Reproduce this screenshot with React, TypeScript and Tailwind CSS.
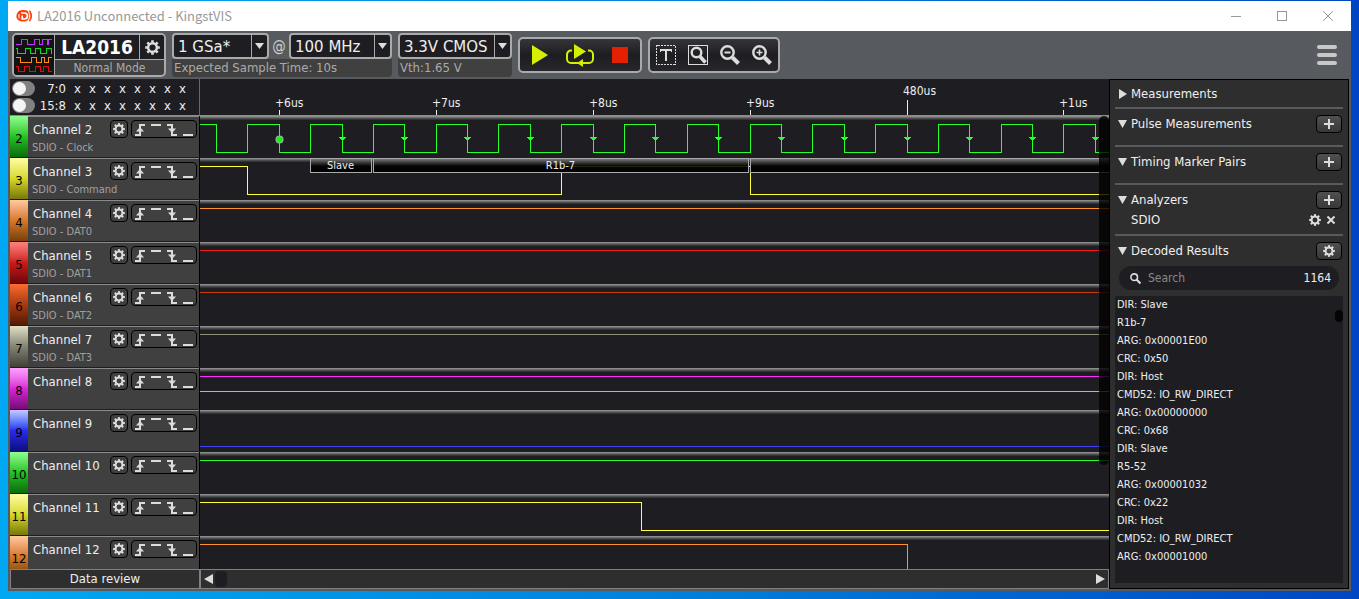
import type { ReactNode } from "react"

interface Channel {
  id: number
  role?: string
  line: string
  badge: string
  path: string
}

// y of the high and low level inside a 42px lane
const HIGH = 8.5
const LOW = 36.5
const END = 4000

const flat = (y: number) => `M0 ${y}H${END}`

const PERIOD = 62.78
const CLOCK_FALLS = Array.from({ length: 60 }, (_, i) => Math.round(15.95 + PERIOD * i) + 0.5)
const CLOCK_RISES = Array.from({ length: 60 }, (_, i) => Math.round(47.3 + PERIOD * i) + 0.5)
const clockPath = `M0 ${HIGH}` + CLOCK_FALLS.map((x, i) => `H${x}V${LOW}H${CLOCK_RISES[i]}V${HIGH}`).join("")

const channels: Channel[] = [
  { id: 2, role: "SDIO - Clock", line: "#2bff2b", badge: "from-[#8dff8d] via-[#22c322] to-[#0c6c0c]", path: clockPath },
  { id: 3, role: "SDIO - Command", line: "#ffff3c", badge: "from-[#ffffa0] via-[#d8d826] to-[#77770c]", path: `M0 ${HIGH}H47.5V${LOW}H361.5V${HIGH}H550.5V${LOW}H${END}` },
  { id: 4, role: "SDIO - DAT0", line: "#ff9130", badge: "from-[#ffc9a0] via-[#d87826] to-[#77400c]", path: flat(HIGH) },
  { id: 5, role: "SDIO - DAT1", line: "#ee1c1c", badge: "from-[#ff8080] via-[#cc1a1a] to-[#6e0808]", path: flat(HIGH) },
  { id: 6, role: "SDIO - DAT2", line: "#c83c10", badge: "from-[#ff6a30] via-[#a83a10] to-[#541a06]", path: flat(HIGH) },
  { id: 7, role: "SDIO - DAT3", line: "#8f8f78", badge: "from-[#e2e2c8] via-[#848474] to-[#404036]", path: flat(HIGH) },
  { id: 8, line: "#ff30ff", badge: "from-[#ffa0ff] via-[#d826d8] to-[#770c77]", path: flat(HIGH) },
  { id: 9, line: "#4040f0", badge: "from-[#c8c8ff] via-[#2a2aee] to-[#0e0e80]", path: flat(LOW) },
  { id: 10, line: "#2bff2b", badge: "from-[#8dff8d] via-[#22c322] to-[#0c6c0c]", path: flat(HIGH) },
  { id: 11, line: "#ffff3c", badge: "from-[#ffffa0] via-[#d8d826] to-[#77770c]", path: `M0 ${HIGH}H441.5V${LOW}H${END}` },
  { id: 12, line: "#ff9130", badge: "from-[#ffc9a0] via-[#d87826] to-[#77400c]", path: `M0 ${HIGH}H707.5V${LOW + 20}H${END}` },
]

const ticks = [
  { x: 79, label: "+6us" },
  { x: 236, label: "+7us" },
  { x: 393, label: "+8us" },
  { x: 550, label: "+9us" },
  { x: 707, label: "480us", major: true },
  { x: 863, label: "+1us" },
]

const results = [
  "DIR: Slave",
  "R1b-7",
  "ARG: 0x00001E00",
  "CRC: 0x50",
  "DIR: Host",
  "CMD52: IO_RW_DIRECT",
  "ARG: 0x00000000",
  "CRC: 0x68",
  "DIR: Slave",
  "R5-52",
  "ARG: 0x00001032",
  "CRC: 0x22",
  "DIR: Host",
  "CMD52: IO_RW_DIRECT",
  "ARG: 0x00001000",
]

const GEAR_TEETH = [0, 45, 90, 135, 180, 225, 270, 315]

function Gear({ size }: { size: number }) {
  return (
    <svg width={size} height={size} viewBox="0 0 16 16" fill="none" stroke="#dcdcdc" aria-hidden="true">
      <circle cx="8" cy="8" r="4.6" strokeWidth="2.6" />
      {GEAR_TEETH.map((a) => (
        <path key={a} d="M8 3.2V0.2" strokeWidth="2.8" transform={`rotate(${a} 8 8)`} />
      ))}
    </svg>
  )
}

function TitleBar() {
  return (
    <header className="flex h-[30px] shrink-0 items-center bg-white pl-2">
      <svg width="16" height="16" viewBox="0 0 16 16" aria-hidden="true">
        <path d="M3 3C5 1.800 9 1.600 11.200 2.600c2.400 1.200 3.400 3.600 3 6-.6 3-3.400 5-6.800 5-2.400 0-4.400-.6-5.600-1.800C-.2 9.800-.2 5.600 3 3z" fill="#f4420c" />
        <path d="M5 5h3.400a3 3 0 0 1 0 6H6.200V7.600" fill="none" stroke="#fff" strokeWidth="1.700" />
        <path d="M13.400 2.600c2.200 3 2.200 7.400 0 10.600" fill="none" stroke="#f4420c" strokeWidth="1.600" />
        <path d="M12.200 2.800c1.700 3 1.700 7.200 0 10.200M3 6v4.400" fill="none" stroke="#fff" strokeWidth="1" />
      </svg>
      <h1 className="ml-[5px] flex-1 font-['Noto_Sans_CJK_SC',sans-serif] text-[13px] leading-[18px] text-[#999]">LA2016 Unconnected - KingstVIS</h1>
      <button type="button" aria-label="Minimize" className="flex h-full w-[46px] items-center justify-center">
        <svg width="10" height="10" stroke="#999" shapeRendering="crispEdges"><path d="M0 5.500h10" /></svg>
      </button>
      <button type="button" aria-label="Maximize" className="flex h-full w-[46px] items-center justify-center">
        <svg width="10" height="10" stroke="#999" fill="none" shapeRendering="crispEdges"><path d="M.5.500h9v9h-9z" /></svg>
      </button>
      <button type="button" aria-label="Close" className="flex h-full w-[46px] items-center justify-center">
        <svg width="10" height="10" stroke="#999"><path d="M0 0l10 10M10 0L0 10" /></svg>
      </button>
    </header>
  )
}

function ModelBox() {
  return (
    <div className="flex h-11 w-[154px] overflow-hidden rounded-[5px] border-2 border-[#aaa] bg-[#404040]">
      <svg width="40" height="40" viewBox="42 105 120 120" className="shrink-0 bg-[#131313]" fill="none" strokeWidth="3" shapeRendering="crispEdges" aria-hidden="true">
        <path stroke="#c030ff" d="M48 134H65V119H83V134H102V119H119V134H126V119H141V134H144V119H156" />
        <path stroke="#10d820" d="M48 146H52V161H76V146H91V161H106V146H121V161H139V146H154V161" />
        <path stroke="#ff8a10" d="M48 173H61V188H94V173H109V188H124V173H133V188H145V173H156" />
        <path stroke="#e00c0c" d="M48 200H55V214H72V200H87V214H106V200H121V214H130V200H145V214H156" />
      </svg>
      <div className="flex flex-1 flex-col border-l border-[#aaa]">
        <div className="flex h-[25px] border-b border-[#aaa] bg-[#1e1e22]">
          <span className="flex-1 text-center text-[19px] leading-6 font-bold text-white">LA2016</span>
          <button type="button" aria-label="Device settings" className="flex w-[25px] items-center justify-center border-l border-[#aaa]">
            <Gear size={15} />
          </button>
        </div>
        <span className="text-center text-[12px] leading-4 text-[#aaa]">Normal Mode</span>
      </div>
    </div>
  )
}

function Combo({ label, value, className }: { label: string; value: string; className: string }) {
  return (
    <div className={`relative h-[26px] rounded-[4px] border-2 border-[#aaa] bg-[#1e1e22] ${className}`}>
      <select aria-label={label} className="h-full w-full appearance-none pl-1 font-['DejaVu_Sans',sans-serif] text-[15px] leading-[22px] text-[#eee] outline-none">
        <option>{value}</option>
      </select>
      <span className="pointer-events-none absolute inset-y-0 right-0 flex w-4 items-center justify-center border-l border-[#aaa]">
        <svg width="9" height="6" fill="#ddd"><path d="M0 0h9L4.500 6z" /></svg>
      </span>
    </div>
  )
}

function ToolButton({ label, wide, children }: { label: string; wide?: boolean; children: ReactNode }) {
  return (
    <button type="button" aria-label={label} className={`flex h-full items-center justify-center ${wide ? "w-10" : "w-8"}`}>
      {children}
    </button>
  )
}

function Magnifier({ children }: { children: ReactNode }) {
  return (
    <svg width="20" height="20" viewBox="0 0 20 20" fill="none" stroke="#dcdcdc" aria-hidden="true">
      <circle cx="7.500" cy="7.500" r="6.200" strokeWidth="2.400" />
      <path d="M12.500 12.500l6 6" strokeWidth="4" />
      {children}
    </svg>
  )
}

function Toolbar() {
  return (
    <div className="flex h-12 shrink-0 items-start gap-1.5 pt-0.5 pr-3 pl-0.5">
      <ModelBox />
      <div className="rounded-[4px] bg-[#404040]">
        <div className="flex items-center bg-[#575b5f]">
          <Combo label="Sample depth" value="1 GSa*" className="w-[97px]" />
          <span className="w-5 text-center text-[15px] leading-[26px] text-[#ccc]">@</span>
          <Combo label="Sample rate" value="100 MHz" className="w-[103px]" />
        </div>
        <p className="pl-0.5 text-[13px] leading-[18px] text-[#aaa]">Expected Sample Time: 10s</p>
      </div>
      <div className="rounded-[4px] bg-[#404040]">
        <Combo label="Threshold" value="3.3V CMOS" className="w-[114px]" />
        <p className="pl-0.5 text-[13px] leading-[18px] text-[#aaa]">Vth:1.65 V</p>
      </div>
      <div className="mt-1 flex h-9 rounded-[5px] border-2 border-[#aaa] bg-linear-to-b from-[#34343a] via-[#1e1e22] to-[#26262b]">
        <ToolButton label="Start" wide>
          <svg width="16" height="20" fill="#d2f000"><path d="M0 0L16 10L0 20z" /></svg>
        </ToolButton>
        <ToolButton label="Start repeatedly" wide>
          <svg width="28" height="23" viewBox="0 0 28 23" fill="none" stroke="#d2f000" strokeWidth="2">
            <path d="M6 6.500H5a4 4 0 0 0-4 4V15a4 4 0 0 0 4 4H23a4 4 0 0 0 4-4v-4.500a4 4 0 0 0-4-4h-1" />
            <path d="M8 0L20 7.500L8 15z" fill="#d2f000" stroke="none" />
            <path d="M11 19l6-4v8z" fill="#d2f000" stroke="none" />
          </svg>
        </ToolButton>
        <ToolButton label="Stop" wide>
          <span className="size-4 bg-[#e32000]" />
        </ToolButton>
      </div>
      <div className="mt-1 flex h-9 rounded-[5px] border-2 border-[#aaa] bg-linear-to-b from-[#34343a] via-[#1e1e22] to-[#26262b]">
        <ToolButton label="Add text note">
          <svg width="20" height="20" fill="none" stroke="#dcdcdc" shapeRendering="crispEdges">
            <rect x=".5" y=".5" width="19" height="19" rx="1" strokeDasharray="2 1" />
            <path d="M4.500 7V4M15.500 7V4" />
            <path d="M4 5h12M10 5V16" strokeWidth="2" />
          </svg>
        </ToolButton>
        <ToolButton label="Zoom to fit">
          <svg width="20" height="20" fill="none" stroke="#dcdcdc">
            <rect x=".5" y=".5" width="19" height="19" />
            <circle cx="8.500" cy="7.500" r="4.800" strokeWidth="2.400" />
            <path d="M12 11.500l5.500 6" strokeWidth="3.600" />
          </svg>
        </ToolButton>
        <ToolButton label="Zoom out">
          <Magnifier><path d="M4.500 7.500h6" strokeWidth="2" /></Magnifier>
        </ToolButton>
        <ToolButton label="Zoom in">
          <Magnifier><path d="M4.500 7.500h6M7.500 4.500v6" strokeWidth="1.600" /></Magnifier>
        </ToolButton>
      </div>
      <button type="button" aria-label="Menu" className="mt-3 ml-auto flex w-5 flex-col gap-1">
        <span className="h-1 w-full rounded-full bg-[#c8c8c8]" />
        <span className="h-1 w-full rounded-full bg-[#c8c8c8]" />
        <span className="h-1 w-full rounded-full bg-[#c8c8c8]" />
      </button>
    </div>
  )
}

function BusRow({ label }: { label: string }) {
  return (
    <div className="flex h-[17px] items-center pl-0.5 text-[13px] text-[#eee]">
      <input
        type="checkbox"
        aria-label={`Bus ${label}`}
        className="h-[15px] w-[23px] appearance-none rounded-full bg-[#808080] before:ml-px before:mt-px before:block before:size-[13px] before:rounded-full before:bg-[#f4f4f4] checked:before:ml-2"
      />
      <span className="mr-[6px] w-[31px] text-right">{label}</span>
      {Array.from({ length: 8 }, (_, i) => (
        <span key={i} className="w-[15px] pl-0.5">x</span>
      ))}
    </div>
  )
}

function Ruler() {
  return (
    <svg className="h-full min-w-0 flex-1" fill="#eee" shapeRendering="crispEdges">
      {ticks.map((t) => (
        <g key={t.label}>
          <rect x={t.x} y={t.major ? 21 : 31} width="1" height={t.major ? 15 : 5} />
          <text x={t.x - 4} y={t.major ? 16 : 28} fontSize="12">{t.label}</text>
        </g>
      ))}
    </svg>
  )
}

function TriggerButton({ label, d, head }: { label: string; d: string; head?: string }) {
  return (
    <button type="button" aria-label={label} className="h-4 w-4">
      <svg width="16" height="16" fill="none" stroke="#dcdcdc" strokeWidth="2">
        <path d={d} />
        {head && <path d={head} fill="#dcdcdc" stroke="none" />}
      </svg>
    </button>
  )
}

function ChannelLabel({ channel }: { channel: Channel }) {
  return (
    <div className="flex w-[190px] shrink-0 border-r border-black">
      <div className={`w-[18px] bg-linear-to-b text-center text-[13px] leading-[46px] text-black ${channel.badge}`}>{channel.id}</div>
      <div className="flex-1 border-t border-[#8a8a8a] bg-[#404040] pt-[3px]">
        <div className="flex h-[18px] pr-0.5">
          <span className="flex-1 pl-[5px] text-[13px] leading-[20px] text-[#eee]">Channel {channel.id}</span>
          <button type="button" aria-label={`Channel ${channel.id} settings`} className="mr-[3px] flex size-[18px] items-center justify-center rounded-[4px] border border-black">
            <Gear size={12} />
          </button>
          <div className="flex rounded-[4px] border border-black">
            <TriggerButton label="Rising edge" d="M3 14H8V4H13" head="M8 6l4 4.500h-8z" />
            <TriggerButton label="High level" d="M3 4H13" />
            <TriggerButton label="Falling edge" d="M3 4H8V14H13" head="M8 12l4-4.500h-8z" />
            <TriggerButton label="Low level" d="M3 14H13" />
          </div>
        </div>
        {channel.role && <p className="pl-1 text-[11px] leading-[20px] text-[#a0a0a0]">{channel.role}</p>}
      </div>
    </div>
  )
}

function DecodeBox({ x, width, label }: { x: number; width: number; label?: string }) {
  return (
    <g>
      <rect x={x + 0.5} y="0.5" width={width} height="14" fill="url(#decode)" stroke="#aaa" />
      {label && (
        <text x={x + width / 2} y="11" fontSize="11" fill="#eee" textAnchor="middle">{label}</text>
      )}
    </g>
  )
}

function Lane({ channel }: { channel: Channel }) {
  return (
    <svg className="h-[42px] min-w-0 flex-1" shapeRendering="crispEdges" fill="none">
      <rect width="100%" height="1" fill="#8c8c8c" />
      <rect y="1" width="100%" height="1" fill="#6c6c6c" />
      <rect y="2" width="100%" height="1" fill="#4c4c4e" />
      <rect y="3" width="100%" height="1" fill="#343437" />
      <path d={channel.path} stroke={channel.line} />
      {channel.id === 2 && (
        <g fill={channel.line}>
          {CLOCK_FALLS.slice(2).map((x) => (
            <path key={x} d={`M${x - 3.5} 21h7v1h-1v1h-1v1h-1v1h-1v-1h-1v-1h-1v-1h-1z`} />
          ))}
          <circle cx={CLOCK_FALLS[1]} cy="23.500" r="4" fill="#aaa" shapeRendering="auto" />
          <circle cx={CLOCK_FALLS[1]} cy="23.500" r="3" fill="#00ff00" shapeRendering="auto" />
        </g>
      )}
      {channel.id === 3 && (
        <>
          <defs>
            <linearGradient id="decode" x1="0" y1="0" x2="0" y2="1">
              <stop offset="0" stopColor="#808080" />
              <stop offset="0.550" stopColor="#000" stopOpacity="0.850" />
              <stop offset="1" stopColor="#000" />
            </linearGradient>
          </defs>
          <DecodeBox x={110} width={61} label="Slave" />
          <DecodeBox x={173} width={375} label="R1b-7" />
          <DecodeBox x={550} width={END} />
        </>
      )}
      {channel.id === 8 && <path d={flat(23.5)} stroke="#b4b4b4" />}
    </svg>
  )
}

function Analyzer() {
  return (
    <main className="flex min-w-0 flex-1 flex-col">
      <div className="flex h-[37px] shrink-0 border-b border-[#8c8c8c] bg-[#1e1e22]">
        <div className="w-[190px] shrink-0 border-r border-[#666] pt-px">
          <BusRow label="7:0" />
          <BusRow label="15:8" />
        </div>
        <Ruler />
      </div>
      <div className="relative min-h-0 flex-1 overflow-hidden bg-[#1e1e22]">
        {channels.map((c) => (
          <div key={c.id} className="flex h-[42px]">
            <div className="flex border-b border-[#1e1e22]">
              <ChannelLabel channel={c} />
            </div>
            <Lane channel={c} />
          </div>
        ))}
        <div className="absolute top-0 right-0 h-[77%] w-[10px] rounded-full bg-black/80" />
      </div>
      <div className="flex h-5 shrink-0 bg-[#2e2e2e]">
        <button type="button" className="w-[190px] border border-[#808080] text-[13px] leading-[18px] text-[#eee]">Data review</button>
        <div className="flex flex-1 items-center border border-[#808080] px-[3px]">
          <button type="button" aria-label="Scroll left"><svg width="9" height="10" fill="#ddd"><path d="M9 0v10L0 5z" /></svg></button>
          <div className="ml-0.5 h-4 w-3 rounded-[4px] bg-[#1e1e22]" />
          <button type="button" aria-label="Scroll right" className="ml-auto"><svg width="9" height="10" fill="#ddd"><path d="M0 0v10L9 5z" /></svg></button>
        </div>
      </div>
    </main>
  )
}

function PanelButton({ label, children }: { label: string; children: ReactNode }) {
  return (
    <button type="button" aria-label={label} className="flex h-[18px] w-[26px] items-center justify-center rounded-[4px] border border-black bg-linear-to-b from-[#505050] to-[#383838]">
      {children}
    </button>
  )
}

const Plus = () => (
  <svg width="10" height="10" stroke="#dcdcdc" strokeWidth="2"><path d="M5 0v10M0 5h10" /></svg>
)

function SectionTitle({ title, children }: { title: string; children?: ReactNode }) {
  return (
    <div className="flex h-[18px] items-center pr-px pl-[3px]">
      <svg width="9" height="8" fill="#ddd"><path d="M0 0h9L4.500 8z" /></svg>
      <h2 className="flex-1 pl-1 text-[13px] leading-[18px] text-[#eee]">{title}</h2>
      {children}
    </div>
  )
}

function SidePanel() {
  return (
    <aside className="flex w-60 shrink-0 flex-col border border-black bg-[#2e2e2e] px-[5px] pb-[5px]">
      <section className="flex h-[29px] shrink-0 items-center border-b-2 border-[#575b5f] pl-1">
        <svg width="8" height="10" fill="#ddd"><path d="M0 0v10L8 5z" /></svg>
        <h2 className="pl-1 text-[13px] leading-[18px] text-[#eee]">Measurements</h2>
      </section>
      <section className="border-b-2 border-[#575b5f] pt-1.5 pb-3">
        <SectionTitle title="Pulse Measurements"><PanelButton label="Add pulse measurement"><Plus /></PanelButton></SectionTitle>
      </section>
      <section className="border-b-2 border-[#575b5f] pt-1.5 pb-3">
        <SectionTitle title="Timing Marker Pairs"><PanelButton label="Add marker pair"><Plus /></PanelButton></SectionTitle>
      </section>
      <section className="border-b-2 border-[#575b5f] pt-1.5 pb-1">
        <SectionTitle title="Analyzers"><PanelButton label="Add analyzer"><Plus /></PanelButton></SectionTitle>
        <div className="flex h-[21px] items-center gap-1.5 pr-2 pl-4">
          <span className="flex-1 text-[13px] leading-[18px] text-[#eee]">SDIO</span>
          <button type="button" aria-label="SDIO settings"><Gear size={12} /></button>
          <button type="button" aria-label="Remove SDIO"><svg width="8" height="8" stroke="#dcdcdc" strokeWidth="2"><path d="M.5.500l7 7M7.500.500l-7 7" /></svg></button>
        </div>
      </section>
      <section className="flex min-h-0 flex-1 flex-col gap-1.5 pt-1.5">
        <SectionTitle title="Decoded Results"><PanelButton label="Result settings"><Gear size={12} /></PanelButton></SectionTitle>
        <div className="mx-1 flex h-6 shrink-0 items-center rounded-full bg-[#1e1e22] pr-2 pl-[11px] text-[12px]">
          <svg width="11" height="11" fill="none" stroke="#dcdcdc" strokeWidth="1.600"><circle cx="4.200" cy="4.200" r="3.300" /><path d="M6.500 6.500l4 4" strokeWidth="2.200" /></svg>
          <input type="text" aria-label="Search results" placeholder="Search" className="min-w-0 flex-1 pl-[7px] outline-none placeholder:text-[#888]" />
          <span className="text-[#eee]">1164</span>
        </div>
        <div className="relative min-h-0 flex-1 overflow-hidden bg-[#1e1e22]">
          <ul className="pl-0.5 text-[11px] leading-[18px] text-[#eee]">
            {results.map((r, i) => (
              <li key={i}>{r}</li>
            ))}
          </ul>
          <div className="absolute top-3.5 right-0 h-3 w-2 rounded-full bg-[#050505]" />
        </div>
      </section>
    </aside>
  )
}

export default function App() {
  return (
    <div className="flex h-screen flex-col overflow-hidden bg-linear-to-r from-[#00a8f3] via-[#0080dc] to-[#0046c4] px-2 pt-px pb-2 font-['DejaVu_Sans_Condensed','DejaVu_Sans',sans-serif]">
      <TitleBar />
      <div className="flex min-h-0 flex-1 flex-col bg-[#575b5f] px-0.5 pb-0.5">
        <Toolbar />
        <div className="flex min-h-0 flex-1">
          <Analyzer />
          <SidePanel />
        </div>
      </div>
    </div>
  )
}
